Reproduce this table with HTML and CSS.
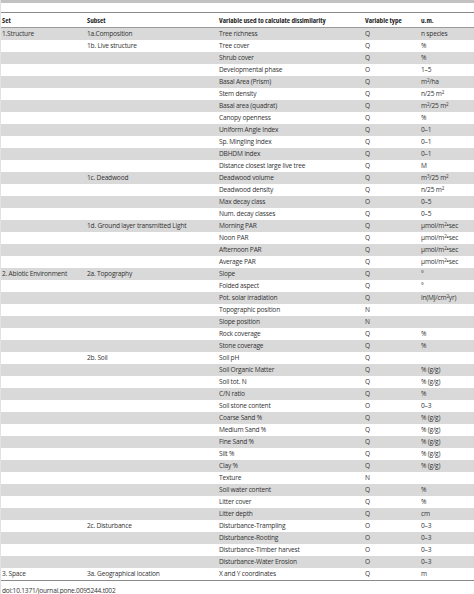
FILE: index.html
```html
<!DOCTYPE html>
<html lang="en">
<head>
<meta charset="utf-8">
<title>Table</title>
<link rel="stylesheet" href="styles.css">
</head>
<body>
<div class="page">
  <div class="topband"></div>
  <div class="table">
    <div class="row head">
      <div>Set</div><div>Subset</div><div>Variable used to calculate dissimilarity</div><div>Variable type</div><div>u.m.</div>
    </div>
    <div class="row"><div>1.Structure</div><div>1a.Composition</div><div>Tree richness</div><div>Q</div><div>n species</div></div>
    <div class="row"><div></div><div>1b. Live structure</div><div>Tree cover</div><div>Q</div><div>%</div></div>
    <div class="row"><div></div><div></div><div>Shrub cover</div><div>Q</div><div>%</div></div>
    <div class="row"><div></div><div></div><div>Developmental phase</div><div>O</div><div>1–5</div></div>
    <div class="row"><div></div><div></div><div>Basal Area (Prism)</div><div>Q</div><div>m<sup>2</sup>/ha</div></div>
    <div class="row"><div></div><div></div><div>Stem density</div><div>Q</div><div>n/25 m<sup>2</sup></div></div>
    <div class="row"><div></div><div></div><div>Basal area (quadrat)</div><div>Q</div><div>m<sup>2</sup>/25 m<sup>2</sup></div></div>
    <div class="row"><div></div><div></div><div>Canopy openness</div><div>Q</div><div>%</div></div>
    <div class="row"><div></div><div></div><div>Uniform Angle Index</div><div>Q</div><div>0–1</div></div>
    <div class="row"><div></div><div></div><div>Sp. Mingling Index</div><div>Q</div><div>0–1</div></div>
    <div class="row"><div></div><div></div><div>DBHDM Index</div><div>Q</div><div>0–1</div></div>
    <div class="row"><div></div><div></div><div>Distance closest large live tree</div><div>Q</div><div>M</div></div>
    <div class="row"><div></div><div>1c. Deadwood</div><div>Deadwood volume</div><div>Q</div><div>m<sup>3</sup>/25 m<sup>2</sup></div></div>
    <div class="row"><div></div><div></div><div>Deadwood density</div><div>Q</div><div>n/25 m<sup>2</sup></div></div>
    <div class="row"><div></div><div></div><div>Max decay class</div><div>O</div><div>0–5</div></div>
    <div class="row"><div></div><div></div><div>Num. decay classes</div><div>Q</div><div>0–5</div></div>
    <div class="row"><div></div><div>1d. Ground layer transmitted Light</div><div>Morning PAR</div><div>Q</div><div>μmol/m<sup>2</sup>•sec</div></div>
    <div class="row"><div></div><div></div><div>Noon PAR</div><div>Q</div><div>μmol/m<sup>2</sup>•sec</div></div>
    <div class="row"><div></div><div></div><div>Afternoon PAR</div><div>Q</div><div>μmol/m<sup>2</sup>•sec</div></div>
    <div class="row"><div></div><div></div><div>Average PAR</div><div>Q</div><div>μmol/m<sup>2</sup>•sec</div></div>
    <div class="row"><div>2. Abiotic Environment</div><div>2a. Topography</div><div>Slope</div><div>Q</div><div>°</div></div>
    <div class="row"><div></div><div></div><div>Folded aspect</div><div>Q</div><div>°</div></div>
    <div class="row"><div></div><div></div><div>Pot. solar irradiation</div><div>Q</div><div>ln(MJ/cm<sup>2</sup>yr)</div></div>
    <div class="row"><div></div><div></div><div>Topographic position</div><div>N</div><div></div></div>
    <div class="row"><div></div><div></div><div>Slope position</div><div>N</div><div></div></div>
    <div class="row"><div></div><div></div><div>Rock coverage</div><div>Q</div><div>%</div></div>
    <div class="row"><div></div><div></div><div>Stone coverage</div><div>Q</div><div>%</div></div>
    <div class="row"><div></div><div>2b. Soil</div><div>Soil pH</div><div>Q</div><div></div></div>
    <div class="row"><div></div><div></div><div>Soil Organic Matter</div><div>Q</div><div>% (g/g)</div></div>
    <div class="row"><div></div><div></div><div>Soil tot. N</div><div>Q</div><div>% (g/g)</div></div>
    <div class="row"><div></div><div></div><div>C/N ratio</div><div>Q</div><div>%</div></div>
    <div class="row"><div></div><div></div><div>Soil stone content</div><div>O</div><div>0–3</div></div>
    <div class="row"><div></div><div></div><div>Coarse Sand %</div><div>Q</div><div>% (g/g)</div></div>
    <div class="row"><div></div><div></div><div>Medium Sand %</div><div>Q</div><div>% (g/g)</div></div>
    <div class="row"><div></div><div></div><div>Fine Sand %</div><div>Q</div><div>% (g/g)</div></div>
    <div class="row"><div></div><div></div><div>Silt %</div><div>Q</div><div>% (g/g)</div></div>
    <div class="row"><div></div><div></div><div>Clay %</div><div>Q</div><div>% (g/g)</div></div>
    <div class="row"><div></div><div></div><div>Texture</div><div>N</div><div></div></div>
    <div class="row"><div></div><div></div><div>Soil water content</div><div>Q</div><div>%</div></div>
    <div class="row"><div></div><div></div><div>Litter cover</div><div>Q</div><div>%</div></div>
    <div class="row"><div></div><div></div><div>Litter depth</div><div>Q</div><div>cm</div></div>
    <div class="row"><div></div><div>2c. Disturbance</div><div>Disturbance-Trampling</div><div>O</div><div>0–3</div></div>
    <div class="row"><div></div><div></div><div>Disturbance-Rooting</div><div>O</div><div>0–3</div></div>
    <div class="row"><div></div><div></div><div>Disturbance-Timber harvest</div><div>O</div><div>0–3</div></div>
    <div class="row"><div></div><div></div><div>Disturbance-Water Erosion</div><div>O</div><div>0–3</div></div>
    <div class="row last"><div>3. Space</div><div>3a. Geographical location</div><div>X and Y coordinates</div><div>Q</div><div>m</div></div>
  </div>
  <div class="doi">doi:10.1371/journal.pone.0095244.t002</div>
</div>
</body>
</html>
```
FILE: styles.css
```css
html, body {
  margin: 0;
  padding: 0;
  background: #ffffff;
}
.page {
  width: 474px;
  height: 594px;
  overflow: hidden;
  border-left: 1px solid #e2e2e2;
  box-sizing: border-box;
  font-family: "Open Sans", "Liberation Sans", sans-serif;
  font-size: 6.6px;
  font-stretch: 100%;
  letter-spacing: -0.2px;
  color: #333333;
}
.topband {
  height: 3px;
  background: #c2c2c2;
  margin-bottom: 9px;
}
.table {
  border-top: 1px solid #8a8a8a;
  border-bottom: 1px solid #8a8a8a;
}
.row {
  display: grid;
  grid-template-columns: 85px 132px 146px 56px 1fr;
  height: 12px;
  line-height: 12px;
  padding-left: 1px;
  white-space: nowrap;
}
.row:nth-child(even) {
  background: #d9d9d9;
}
.row.head {
  height: 14px;
  line-height: 14px;
  font-weight: 700;
  font-size: 7.2px;
  font-stretch: 75%;
  letter-spacing: 0;
  color: #222222;
  border-bottom: 1px solid #9a9a9a;
}
.row sup {
  font-size: 4.5px;
  line-height: 0;
  vertical-align: 2.5px;
}
.doi {
  margin-top: 5px;
  padding-left: 1px;
  color: #333333;
}
```
